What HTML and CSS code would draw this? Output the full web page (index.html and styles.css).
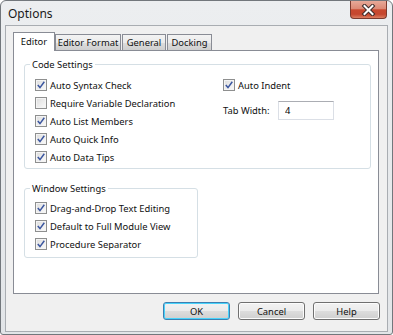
FILE: index.html
```html
<!DOCTYPE html>
<html lang="en">

<head>
  <meta charset="UTF-8" />
  <title>Options</title>
  <link rel="stylesheet" href="styles.css">
</head>

<body>
  <div class="window">
    <div class="titlebar">
      <span class="title">Options</span>
      <button class="close">
        <svg width="17" height="12" viewBox="0 0 17 12">
          <path d="M4.5 2 L12.5 10 M12.5 2 L4.5 10" stroke="#3b2a28" stroke-width="4" stroke-linecap="square" />
          <path d="M4.5 2 L12.5 10 M12.5 2 L4.5 10" stroke="#fff" stroke-width="2" stroke-linecap="square" />
        </svg>
      </button>
    </div>

    <div class="client">
      <div class="tabs">
        <div class="tab active">Editor</div>
        <div class="tab format">Editor Format</div>
        <div class="tab general">General</div>
        <div class="tab docking">Docking</div>
      </div>

      <div class="panel">
        <fieldset class="group code">
          <legend>Code Settings</legend>
          <div class="cols">
            <div class="col">
              <label class="check"><span class="box on"></span>Auto Syntax Check</label>
              <label class="check"><span class="box"></span>Require Variable Declaration</label>
              <label class="check"><span class="box on"></span>Auto List Members</label>
              <label class="check"><span class="box on"></span>Auto Quick Info</label>
              <label class="check"><span class="box on"></span>Auto Data Tips</label>
            </div>
            <div class="col">
              <label class="check"><span class="box on"></span>Auto Indent</label>
              <div class="field">
                <span class="field-label">Tab Width:</span>
                <input type="text" value="4" />
              </div>
            </div>
          </div>
        </fieldset>

        <fieldset class="group window-set">
          <legend>Window Settings</legend>
          <div class="col">
            <label class="check"><span class="box on"></span>Drag-and-Drop Text Editing</label>
            <label class="check"><span class="box on"></span>Default to Full Module View</label>
            <label class="check"><span class="box on"></span>Procedure Separator</label>
          </div>
        </fieldset>
      </div>

      <div class="buttons">
        <button class="btn default">OK</button>
        <button class="btn">Cancel</button>
        <button class="btn">Help</button>
      </div>
    </div>
  </div>
</body>

</html>
```

FILE: styles.css
```css
* {
  margin: 0;
  padding: 0;
  box-sizing: border-box;
}

body {
  font-family: "Noto Sans", "Open Sans", sans-serif;
  font-size: 9.4px;
  color: #111;
  background: #fff;
}

.window {
  width: 393px;
  height: 335px;
  border: 1px solid #72777c;
  border-radius: 6px 6px 3px 3px;
  background: linear-gradient(#eceef0, #e2e5e8);
  padding: 0 4px 2px 4px;
  display: flex;
  flex-direction: column;
}

.titlebar {
  height: 24px;
  display: flex;
  align-items: flex-start;
  padding-left: 3px;
}

.title {
  font-size: 12px;
  line-height: 16px;
  padding-top: 5px;
  color: #1a1a1a;
}

.close {
  margin-left: auto;
  margin-right: 1px;
  width: 37px;
  height: 18px;
  border: 1px solid #7b3a2e;
  border-top: none;
  border-radius: 0 0 4px 4px;
  background: linear-gradient(#e7a998 0%, #dc8a76 45%, #c9492f 52%, #c5472f 78%, #dc7d61 100%);
  display: flex;
  align-items: center;
  justify-content: center;
}

.client {
  flex: 1;
  background: #f0f0f0;
  border: 1px solid #a9adb2;
  padding: 6px 8px 0 7px;
  display: flex;
  flex-direction: column;
}

.tabs {
  display: flex;
  align-items: flex-end;
  height: 19px;
  margin-bottom: -1px;
  position: relative;
  z-index: 1;
}

.tab {
  height: 16px;
  line-height: 15px;
  text-align: center;
  white-space: nowrap;
  border: 1px solid #898c95;
  border-bottom: none;
  margin-bottom: 1px;
  margin-right: 1px;
  background: linear-gradient(#f3f3f3 0%, #ebebeb 50%, #dddddd 51%, #cfcfcf 100%);
}

.tab.active {
  width: 42px;
  height: 19px;
  line-height: 17px;
  margin-bottom: 0;
  margin-right: 0;
  background: #fff;
}

.tab.format {
  width: 66px;
}

.tab.general {
  width: 44px;
}

.tab.docking {
  width: 45px;
}

.panel {
  height: 244px;
  background: #fff;
  border: 1px solid #898c95;
  padding: 7px 7px 0 10px;
}

.group {
  border: 1px solid #d5dfe5;
  border-radius: 3px;
}

.group legend {
  margin-left: 5px;
  padding: 0 2px;
  line-height: 13px;
}

.code .cols {
  display: grid;
  grid-template-columns: 188px 1fr;
  padding: 5px 10px 2px;
}

.window-set {
  width: 174px;
  margin-top: 13px;
}

.window-set .col {
  padding: 4px 10px 4px;
}

.check {
  display: flex;
  align-items: center;
  height: 18px;
  white-space: nowrap;
}

.box {
  width: 12px;
  height: 12px;
  margin-right: 3px;
  border: 1px solid #8e8f8f;
  background: linear-gradient(135deg, #dcdcdc, #fbfbfb);
  box-shadow: inset 0 0 0 1px #f4f4f4;
}

.box.on {
  background-image: url("data:image/svg+xml,%3Csvg xmlns='http://www.w3.org/2000/svg' width='10' height='10'%3E%3Cpath d='M1.8 5 L4 7.6 L8.3 1.8' fill='none' stroke='%233a559f' stroke-width='1.5'/%3E%3C/svg%3E"), linear-gradient(135deg, #dcdcdc, #fbfbfb);
  background-repeat: no-repeat;
}

.field {
  display: flex;
  align-items: center;
  margin-top: 7px;
}

.field-label {
  width: 55px;
}

.field input {
  width: 56px;
  height: 19px;
  border: 1px solid #dbdfe6;
  border-top-color: #abadb3;
  padding-left: 6px;
  font: inherit;
  color: #000;
  outline: none;
}

.buttons {
  display: flex;
  justify-content: flex-end;
  gap: 8px;
  margin-top: 8px;
  margin-right: -1px;
}

.btn {
  width: 67px;
  height: 18px;
  border: 1px solid #707070;
  border-radius: 3px;
  background: linear-gradient(#f2f2f2 0%, #ebebeb 50%, #dddddd 51%, #cfcfcf 100%);
  font: inherit;
  color: #111;
  box-shadow: inset 0 0 0 1px #fcfcfc;
}

.btn.default {
  border-color: #3c7fb1;
  box-shadow: inset 0 0 0 1px #48d3fb;
}
```
